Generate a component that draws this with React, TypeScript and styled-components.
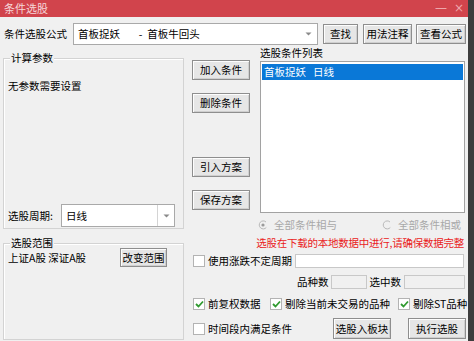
import React from "react";
import styled, { createGlobalStyle } from "styled-components";

const Global = createGlobalStyle`
  html, body { margin: 0; padding: 0; background: #3d3d3d; }
  body { font-family: "Noto Sans CJK SC", "Noto Sans", sans-serif; font-size: 10.5px; color: #000; }
  * { box-sizing: border-box; }
`;

const Window = styled.div`
  width: 468px;
  height: 341px;
  background: #f0f0f0;
  display: flex;
  flex-direction: column;
  overflow: hidden;
`;

const TitleBar = styled.div`
  height: 17px;
  background: #d1444c;
  display: flex;
  align-items: center;
  padding: 0 4px;
  color: #f6d7d9;
  font-size: 11px;
  line-height: 17px;
`;

const TitleText = styled.span`
  flex: 1;
`;

const TitleCtl = styled.span<{ $ml?: number }>`
  color: #eea7ab;
  font-size: 12px;
  margin-left: ${(p) => p.$ml ?? 0}px;
  font-family: "DejaVu Sans", sans-serif;
`;

const FormulaRow = styled.div`
  margin-top: 6px;
  height: 22px;
  display: flex;
  align-items: center;
  padding-left: 4px;
`;

const Label = styled.span<{ $w?: number }>`
  line-height: 14px;
  white-space: nowrap;
  ${(p) => (p.$w ? `width: ${p.$w}px; flex: none;` : "")}
`;

const Combo = styled.div<{ $w: number; $h: number }>`
  width: ${(p) => p.$w}px;
  height: ${(p) => p.$h}px;
  flex: none;
  background: #fff;
  border: 1px solid #a9a9a9;
  display: flex;
  align-items: center;
  padding-left: 4px;
`;

const ComboText = styled.span`
  flex: 1;
  white-space: pre;
  line-height: 14px;
`;

const DropArea = styled.span<{ $sep?: boolean }>`
  width: 17px;
  height: 100%;
  display: flex;
  align-items: center;
  justify-content: center;
  border-left: ${(p) => (p.$sep ? "1px solid #d4d4d4" : "none")};
`;

const Button = styled.button<{ $w: number; $h?: number; $ml?: number; $mt?: number }>`
  width: ${(p) => p.$w}px;
  height: ${(p) => p.$h ?? 20}px;
  margin-left: ${(p) => p.$ml ?? 0}px;
  margin-top: ${(p) => p.$mt ?? 0}px;
  flex: none;
  padding: 0;
  font: inherit;
  font-size: 10.5px;
  line-height: 14px;
  color: #000;
  background: #e6e6e6;
  border: 1px solid #8e8e8e;
  box-shadow: inset 1px 1px 0 #fdfdfd, inset -1px -1px 0 #cfcfcf;
  white-space: nowrap;
`;

const Main = styled.div`
  display: flex;
  flex: 1;
`;

const LeftCol = styled.div`
  width: 184px;
  padding-left: 3px;
  display: flex;
  flex-direction: column;
`;

const Group = styled.div<{ $mt: number; $h: number }>`
  position: relative;
  margin-top: ${(p) => p.$mt}px;
  height: ${(p) => p.$h}px;
  border: 1px solid #d3d3d3;
  box-shadow: inset 1px 1px 0 #fff;
  display: flex;
  flex-direction: column;
  padding: 0 0 1px 4px;
`;

const Legend = styled.span`
  position: absolute;
  top: -8px;
  left: 6px;
  padding: 0 1px;
  background: #f0f0f0;
  line-height: 14px;
`;

const GroupNote = styled.div`
  margin-top: 20px;
  line-height: 14px;
`;

const PeriodRow = styled.div`
  margin-top: auto;
  display: flex;
  align-items: center;
  height: 23px;
`;

const RangeRow = styled.div`
  margin-top: 4px;
  display: flex;
  align-items: center;
  height: 19px;
  padding-right: 16px;
  justify-content: space-between;
`;

const RightCol = styled.div`
  margin-left: 8px;
  width: 274px;
  display: flex;
  flex-direction: column;
`;

const TopArea = styled.div`
  display: flex;
`;

const ButtonCol = styled.div`
  width: 58px;
  display: flex;
  flex-direction: column;
  padding-top: 15px;
`;

const ListCol = styled.div`
  margin-left: 10px;
  width: 205px;
  display: flex;
  flex-direction: column;
  padding-top: 1px;
`;

const ListBox = styled.div`
  margin-top: 1px;
  height: 152px;
  background: #fff;
  border: 1px solid #a2a2a2;
  padding: 2px 1px;
`;

const ListItem = styled.div<{ $sel?: boolean }>`
  height: 16px;
  line-height: 16px;
  padding-left: 2px;
  white-space: pre;
  background: ${(p) => (p.$sel ? "#0a78d7" : "transparent")};
  color: ${(p) => (p.$sel ? "#fff" : "#000")};
`;

const RadioRow = styled.div`
  margin-top: 5px;
  height: 14px;
  display: flex;
  align-items: center;
  margin-left: -2px;
`;

const RadioItem = styled.span<{ $w?: number }>`
  display: flex;
  align-items: center;
  gap: 6px;
  color: #a8a8a8;
  line-height: 14px;
  ${(p) => (p.$w ? `width: ${p.$w}px;` : "")}
`;

const Notice = styled.div`
  margin-top: 4px;
  height: 14px;
  line-height: 14px;
  color: #ea1b22;
  text-align: right;
  padding-right: 2px;
  letter-spacing: -0.25px;
  white-space: nowrap;
`;

const Row = styled.div<{ $mt: number; $h?: number; $pl?: number; $pr?: number }>`
  margin-top: ${(p) => p.$mt}px;
  height: ${(p) => p.$h ?? 14}px;
  display: flex;
  align-items: center;
  padding-left: ${(p) => p.$pl ?? 1}px;
  padding-right: ${(p) => p.$pr ?? 2}px;
`;

const CheckItem = styled.span<{ $w?: number }>`
  display: flex;
  align-items: center;
  gap: 3px;
  line-height: 14px;
  white-space: nowrap;
  ${(p) => (p.$w ? `width: ${p.$w}px; flex: none;` : "")}
`;

const Box = styled.span`
  width: 12px;
  height: 12px;
  flex: none;
  background: #fff;
  border: 1px solid #b3b3b3;
  display: flex;
  align-items: center;
  justify-content: center;
`;

const Field = styled.span<{ $w: number; $h: number; $ml?: number; $white?: boolean }>`
  width: ${(p) => p.$w}px;
  height: ${(p) => p.$h}px;
  margin-left: ${(p) => p.$ml ?? 0}px;
  flex: none;
  background: ${(p) => (p.$white ? "#fff" : "#f0f0f0")};
  border: 1px solid #c8c8c8;
`;

const SubLabel = styled.span`
  margin-left: 3px;
  line-height: 14px;
  white-space: nowrap;
`;

const Spacer = styled.span`
  flex: 1;
`;

const Arrow = () => (
  <svg width="7" height="4" viewBox="0 0 7 4">
    <path d="M0.5 0.5 L6.5 0.5 L3.5 3.5 Z" fill="#8a8a8a" />
  </svg>
);

const Check: React.FC<{ on?: boolean }> = ({ on }) => (
  <Box>
    {on && (
      <svg width="9" height="8" viewBox="0 0 9 8">
        <path d="M1 4 L3.5 6.5 L8 1.5" stroke="#2f9a2f" strokeWidth="1.8" fill="none" />
      </svg>
    )}
  </Box>
);

const Radio: React.FC<{ on?: boolean }> = ({ on }) => (
  <svg width="10" height="10" viewBox="0 0 10 10">
    <path d="M8 2 A4 4 0 1 0 8.3 7.5" stroke="#b8b8b8" strokeWidth="1" fill="none" />
    {on && <circle cx="5" cy="5" r="1.6" fill="#9a9a9a" />}
  </svg>
);

export default function App() {
  return (
    <>
      <Global />
      <Window>
        <TitleBar>
          <TitleText>条件选股</TitleText>
          <TitleCtl>—</TitleCtl>
          <TitleCtl $ml={7}>×</TitleCtl>
        </TitleBar>
        <FormulaRow>
          <Label $w={69}>条件选股公式</Label>
          <Combo $w={245} $h={22}>
            <ComboText>{"首板捉妖        -  首板牛回头"}</ComboText>
            <DropArea>
              <Arrow />
            </DropArea>
          </Combo>
          <Button $w={35} $ml={5}>查找</Button>
          <Button $w={49} $ml={5}>用法注释</Button>
          <Button $w={50} $ml={4}>查看公式</Button>
        </FormulaRow>
        <Main>
          <LeftCol>
            <Group $mt={13} $h={171}>
              <Legend>计算参数</Legend>
              <GroupNote>无参数需要设置</GroupNote>
              <PeriodRow>
                <Label $w={53}>选股周期:</Label>
                <Combo $w={114} $h={23}>
                  <ComboText>日线</ComboText>
                  <DropArea $sep>
                    <Arrow />
                  </DropArea>
                </Combo>
              </PeriodRow>
            </Group>
            <Group $mt={14} $h={97}>
              <Legend>选股范围</Legend>
              <RangeRow>
                <Label>上证A股 深证A股</Label>
                <Button $w={47} $h={19}>改变范围</Button>
              </RangeRow>
            </Group>
          </LeftCol>
          <RightCol>
            <TopArea>
              <ButtonCol>
                <Button $w={58}>加入条件</Button>
                <Button $w={58} $mt={13}>删除条件</Button>
                <Button $w={58} $mt={44}>引入方案</Button>
                <Button $w={58} $mt={13}>保存方案</Button>
              </ButtonCol>
              <ListCol>
                <Label>选股条件列表</Label>
                <ListBox>
                  <ListItem $sel>{"首板捉妖   日线"}</ListItem>
                </ListBox>
                <RadioRow>
                  <RadioItem $w={124}>
                    <Radio on />
                    全部条件相与
                  </RadioItem>
                  <RadioItem>
                    <Radio />
                    全部条件相或
                  </RadioItem>
                </RadioRow>
              </ListCol>
            </TopArea>
            <Notice>选股在下载的本地数据中进行,请确保数据完整</Notice>
            <Row $mt={4}>
              <CheckItem>
                <Check />
                使用涨跌不定周期
              </CheckItem>
              <Spacer />
              <Field $w={169} $h={14} $white />
            </Row>
            <Row $mt={7} $pl={105}>
              <Label>品种数</Label>
              <Field $w={36} $h={14} $ml={2} />
              <SubLabel>选中数</SubLabel>
              <Field $w={61} $h={14} $ml={3} />
            </Row>
            <Row $mt={8}>
              <CheckItem $w={77}>
                <Check on />
                前复权数据
              </CheckItem>
              <CheckItem $w={128}>
                <Check on />
                剔除当前未交易的品种
              </CheckItem>
              <CheckItem>
                <Check on />
                剔除ST品种
              </CheckItem>
            </Row>
            <Row $mt={7} $h={21} $pr={0}>
              <CheckItem>
                <Check />
                时间段内满足条件
              </CheckItem>
              <Spacer />
              <Button $w={58} $h={21}>选股入板块</Button>
              <Button $w={58} $h={21} $ml={17}>执行选股</Button>
            </Row>
          </RightCol>
        </Main>
      </Window>
    </>
  );
}
